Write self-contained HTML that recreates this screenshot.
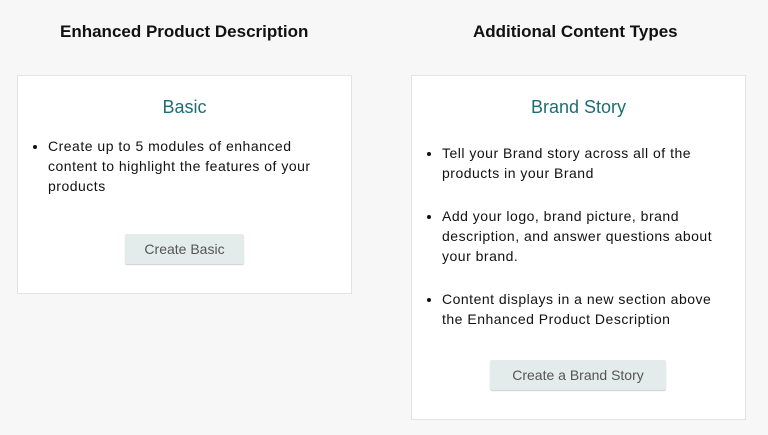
<!DOCTYPE html>
<html><head><style>
body{margin:0;width:768px;height:435px;background:#f7f7f7;font-family:"Liberation Sans",sans-serif;position:relative;overflow:hidden;color:#111}
.h{position:absolute;top:22px;font-size:17px;font-weight:bold;color:#111;white-space:nowrap}
.box{position:absolute;background:#fff;border:1px solid #e3e3e3;box-sizing:border-box}
.t{position:absolute;left:0;right:0;text-align:center;color:#1d6e73;font-size:18px}
ul{position:absolute;margin:0;padding:0 0 0 30px;font-size:14px;letter-spacing:0.5px;line-height:20px;color:#111}
li{margin:0}
.btn{position:absolute;background:#e3ebeb;color:#555;font-size:14px;text-align:center;line-height:30px;height:30px;border-radius:2px;box-shadow:0 1px 1px rgba(0,0,0,.2)}
</style></head><body>
<div class="h" style="left:60px">Enhanced Product Description</div>
<div class="h" style="left:473px">Additional Content Types</div>

<div class="box" style="left:17px;top:75px;width:335px;height:219px">
  <div class="t" style="top:21px">Basic</div>
  <ul style="left:0;top:60px;width:275px"><li>Create up to 5 modules of enhanced content to highlight the features of your products</li></ul>
  <div class="btn" style="left:107px;top:158px;width:119px">Create Basic</div>
</div>

<div class="box" style="left:411px;top:75px;width:335px;height:345px">
  <div class="t" style="top:21px">Brand Story</div>
  <ul style="left:0;top:67px;width:272px">
    <li>Tell your Brand story across all of the products in your Brand</li>
    <li style="margin-top:23px">Add your logo, brand picture, brand description, and answer questions about your brand.</li>
    <li style="margin-top:23px">Content displays in a new section above the Enhanced Product Description</li>
  </ul>
  <div class="btn" style="left:78px;top:284px;width:176px">Create a Brand Story</div>
</div>
</body></html>
